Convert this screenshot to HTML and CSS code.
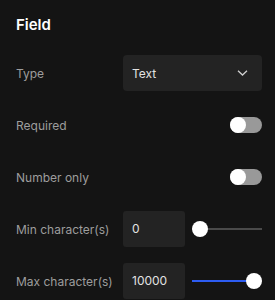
FILE: index.html
```html
<!DOCTYPE html>
<html lang="en">
<head>
  <meta charset="UTF-8">
  <title>Field</title>
  <link rel="stylesheet" href="styles.css">
</head>
<body>
  <div class="panel">
    <h1 class="title">Field</h1>

    <div class="rows">
      <div class="row">
        <span class="label">Type</span>
        <div class="select">
          <span>Text</span>
          <svg width="11" height="6" viewBox="0 0 11 6"><path d="M1 0.8 L5.5 5 L10 0.8" fill="none" stroke="#cfcfcf" stroke-width="1.3"/></svg>
        </div>
      </div>

      <div class="row">
        <span class="label">Required</span>
        <div class="toggle"><span class="knob"></span></div>
      </div>

      <div class="row">
        <span class="label">Number only</span>
        <div class="toggle"><span class="knob"></span></div>
      </div>

      <div class="row">
        <span class="label">Min character(s)</span>
        <div class="range">
          <div class="num">0</div>
          <div class="slider">
            <div class="track"></div>
            <div class="fill" style="width: 0;"></div>
            <span class="thumb" style="left: 0;"></span>
          </div>
        </div>
      </div>

      <div class="row">
        <span class="label">Max character(s)</span>
        <div class="range">
          <div class="num">10000</div>
          <div class="slider">
            <div class="track"></div>
            <div class="fill" style="width: calc(100% - 8px);"></div>
            <span class="thumb" style="left: calc(100% - 16px);"></span>
          </div>
        </div>
      </div>
    </div>
  </div>
</body>
</html>
```

FILE: styles.css
```css
/* Global */
body {
  margin: 0;
  background: #141414;
  font-family: Inter, "Noto Sans", sans-serif;
  color: #e6e6e6;
}

.panel {
  padding: 15px 13px 0 16px;
}

.title {
  margin: 0;
  font-size: 15px;
  font-weight: 600;
  line-height: 20px;
  color: #ffffff;
}

/* Rows */
.rows {
  display: flex;
  flex-direction: column;
  gap: 16px;
  margin-top: 20px;
}

.row {
  display: grid;
  grid-template-columns: 107px 1fr;
  align-items: center;
  height: 36px;
}

.label {
  font-size: 12px;
  color: #9d9d9d;
}

/* Select */
.select {
  display: flex;
  align-items: center;
  justify-content: space-between;
  height: 36px;
  padding: 0 14px 0 9px;
  background: #232323;
  border-radius: 4px;
  font-size: 12px;
  color: #e2e2e2;
}

/* Toggle */
.toggle {
  justify-self: end;
  width: 32px;
  height: 16px;
  border-radius: 8px;
  background: #999999;
  position: relative;
}

.knob {
  position: absolute;
  left: 0;
  top: 0;
  width: 16px;
  height: 16px;
  border-radius: 50%;
  background: #ffffff;
}

/* Number + slider */
.range {
  display: flex;
  align-items: center;
  gap: 7px;
}

.num {
  width: 53px;
  height: 36px;
  line-height: 36px;
  padding-left: 9px;
  background: #232323;
  border-radius: 3px;
  font-size: 12px;
  color: #e2e2e2;
}

.slider {
  flex: 1;
  height: 16px;
  position: relative;
}

.track {
  position: absolute;
  left: 0;
  right: 0;
  top: 7px;
  height: 2px;
  background: #4a4a4a;
}

.fill {
  position: absolute;
  left: 0;
  top: 7px;
  height: 2px;
  background: #2d5cf2;
}

.thumb {
  position: absolute;
  top: 0;
  width: 16px;
  height: 16px;
  border-radius: 50%;
  background: #ffffff;
}
```
